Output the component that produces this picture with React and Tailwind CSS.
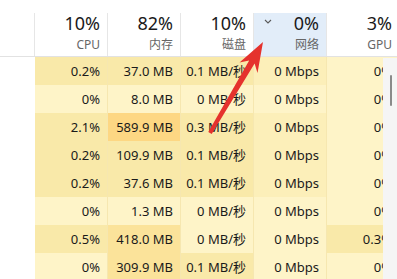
const L = 'bg-[#fef4c8]'
const M = 'bg-[#f9e9a9]'
const O = 'bg-[#fdd783]'
const D = 'bg-[#fbe39a]'
const N = 'bg-[#fcefb9]'

// 列标题
const columnas = [
  { valor: '10%', label: 'CPU' },
  { valor: '82%', label: '内存' },
  { valor: '10%', label: '磁盘' },
  { valor: '0%', label: '网络', activo: true },
  { valor: '3%', label: 'GPU' },
]

const filas = [
  [['0.2%', M], ['37.0 MB', M], ['0.1 MB/秒', M], ['0 Mbps', N], ['0%', L]],
  [['0%', L], ['8.0 MB', L], ['0 MB/秒', L], ['0 Mbps', L], ['0%', L]],
  [['2.1%', M], ['589.9 MB', O], ['0.3 MB/秒', M], ['0 Mbps', N], ['0%', L]],
  [['0.2%', M], ['109.9 MB', M], ['0.1 MB/秒', M], ['0 Mbps', N], ['0%', L]],
  [['0.2%', M], ['37.6 MB', M], ['0.1 MB/秒', M], ['0 Mbps', N], ['0%', L]],
  [['0%', L], ['1.3 MB', L], ['0 MB/秒', L], ['0 Mbps', L], ['0%', L]],
  [['0.5%', M], ['418.0 MB', D], ['0 MB/秒', L], ['0 Mbps', L], ['0.3%', M]],
  [['0%', L], ['309.9 MB', D], ['0.1 MB/秒', M], ['0 Mbps', L], ['0%', L]],
]

export default function App() {
  return (
    <div
      className="relative w-[397px] h-[279px] overflow-hidden bg-white text-[#1a1a1a]"
      style={{ fontFamily: '"Noto Sans", "Noto Sans CJK SC", sans-serif' }}
    >
      {/* Cabecera */}
      <div className="h-[13px]" />
      <div className="flex h-[44px] border-b border-[#e2e2e2] w-[400px]">
        <div className="w-[35px] shrink-0 border-r border-[#e6e6e6]" />
        {columnas.map((c) => (
          <div
            key={c.label}
            className={`relative w-[73px] shrink-0 flex flex-col items-end pr-[7px] border-r border-[#e6e6e6] ${c.activo ? 'bg-[#e2edf9]' : ''}`}
          >
            {c.activo && (
              <svg className="absolute left-[10px] top-[6px]" width="8" height="5" viewBox="0 0 8 5">
                <path d="M1 1 L4 4 L7 1" fill="none" stroke="#5a5a5a" strokeWidth="1.1" />
              </svg>
            )}
            <span className="text-[18px] leading-[20px]">{c.valor}</span>
            <span className="mt-[3px] text-[12px] leading-[18px] text-[#666]">{c.label}</span>
          </div>
        ))}
      </div>

      {/* Filas */}
      <div className="flex flex-col w-[400px]">
        {filas.map((f, i) => (
          <div key={i} className="flex h-[28px]">
            <div className="w-[35px] shrink-0" />
            {f.map(([v, bg], j) => (
              <div
                key={j}
                className={`w-[73px] shrink-0 pr-[7px] text-right text-[13px] leading-[28px] border-r border-[#f6e7b0] ${bg}`}
              >
                {v}
              </div>
            ))}
          </div>
        ))}
      </div>

      {/* Scrollbar */}
      <div className="absolute right-0 top-[58px] bottom-0 w-[14px] bg-[#f5f5f5]">
        <div className="absolute left-[7px] top-[17px] w-[2px] h-[31px] rounded-full bg-[#8a8a8a]" />
      </div>

      {/* Flecha */}
      <svg className="absolute left-0 top-0 pointer-events-none" width="397" height="279" viewBox="0 0 397 279">
        <polygon
          points="263,42 257.5,73 254.6,63.6 211.7,134 208.3,132 249.2,60.4 239.5,62.5"
          fill="#e5322d"
        />
      </svg>
    </div>
  )
}
